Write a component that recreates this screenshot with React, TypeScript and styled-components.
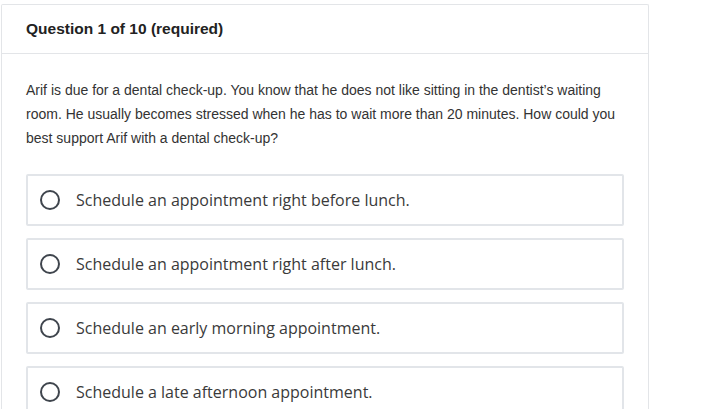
import React from "react";
import styled, { createGlobalStyle } from "styled-components";

const Global = createGlobalStyle`
  html, body { margin: 0; padding: 0; background: #ffffff; }
  body { font-family: "Liberation Sans", Arial, sans-serif; color: #333333; }
  * { box-sizing: border-box; }
`;

const Card = styled.section`
  margin: 4px 0 0 1px;
  width: 648px;
  border: 1px solid #e3e5e8;
  border-bottom: none;
  border-radius: 2px 2px 0 0;
  background: #fff;
`;

const Header = styled.header`
  height: 49px;
  display: flex;
  align-items: center;
  padding: 0 24px;
  border-bottom: 1px solid #e3e5e8;
`;

const Title = styled.h2`
  margin: 0;
  font-family: "Liberation Sans", Arial, sans-serif;
  font-size: 15.5px;
  font-weight: 700;
  color: #222;
`;

const Body = styled.div`
  padding: 24px 24px 0 24px;
`;

const Question = styled.p`
  margin: 0 0 24px 0;
  font-size: 14px;
  line-height: 24px;
  color: #333;
`;

const Options = styled.div`
  display: flex;
  flex-direction: column;
  gap: 12px;
`;

const Option = styled.label`
  display: flex;
  align-items: center;
  gap: 16px;
  height: 52px;
  padding: 0 0 0 12px;
  border: 2px solid #e2e5e9;
  border-radius: 2px;
  cursor: pointer;
`;

const Radio = styled.span`
  width: 20px;
  height: 20px;
  border-radius: 50%;
  border: 2px solid #3f454d;
  flex: none;
`;

const OptionText = styled.span`
  font-family: "Open Sans", sans-serif;
  font-size: 16px;
  color: #3a3a3a;
`;

const options = [
  "Schedule an appointment right before lunch.",
  "Schedule an appointment right after lunch.",
  "Schedule an early morning appointment.",
  "Schedule a late afternoon appointment.",
];

export default function App() {
  return (
    <>
      <Global />
      <Card>
        <Header>
          <Title>Question 1 of 10 (required)</Title>
        </Header>
        <Body>
          <Question>
            Arif is due for a dental check-up. You know that he does not like sitting in the dentist’s waiting
            room. He usually becomes stressed when he has to wait more than 20 minutes. How could you
            best support Arif with a dental check-up?
          </Question>
          <Options>
            {options.map((o) => (
              <Option key={o}>
                <Radio />
                <OptionText>{o}</OptionText>
              </Option>
            ))}
          </Options>
        </Body>
      </Card>
    </>
  );
}
